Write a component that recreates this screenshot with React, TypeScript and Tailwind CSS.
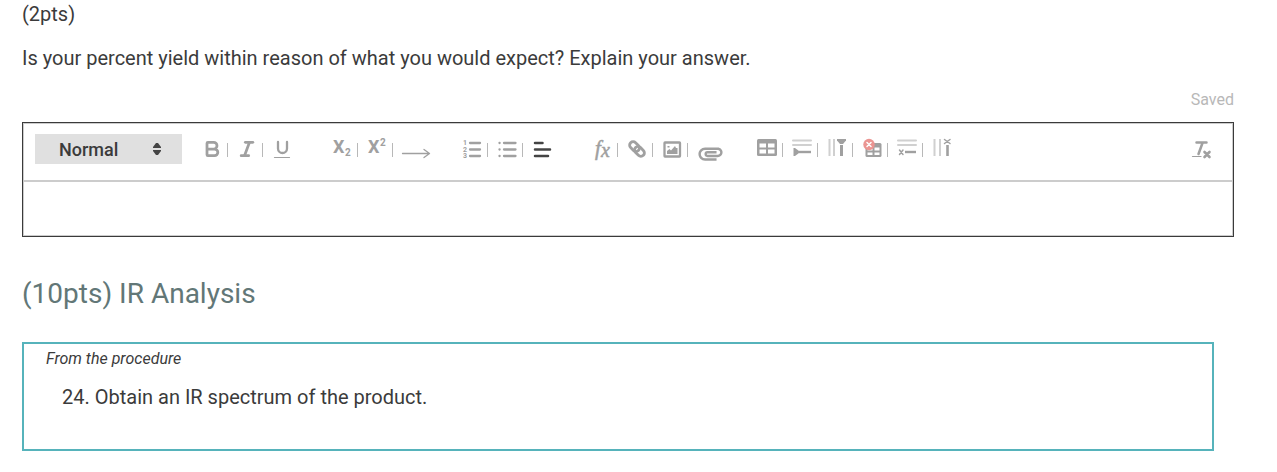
import type { ReactNode } from 'react'
import { Bold, Italic } from 'lucide-react'
import { MdAttachment } from 'react-icons/md'

type Tool = {
  label: string
  icon: ReactNode
  active?: boolean
}

const lightRows = <path d="M9 6.5h18M9 11h18" className="stroke-[#d0d0d0]" />

const groups: Tool[][] = [
  [
    { label: 'Bold', icon: <Bold x={8} y={5} size={20} strokeWidth={3.3} /> },
    { label: 'Italic', icon: <Italic x={8} y={5} size={20} strokeWidth={3.3} /> },
    {
      label: 'Underline',
      icon: (
        <>
          <path d="M14 8v6.5a4.5 4.5 0 0 0 9 0V8" strokeWidth={2.3} />
          <path d="M10.5 23.5h15" strokeWidth={1.2} />
        </>
      ),
    },
  ],
  [
    {
      label: 'Subscript',
      icon: (
        <g className="fill-[#a0a0a0] font-bold" stroke="none">
          <text x="9" y="19" fontSize="18">X</text>
          <text x="21" y="22" fontSize="10">2</text>
        </g>
      ),
    },
    {
      label: 'Superscript',
      icon: (
        <g className="fill-[#a0a0a0] font-bold" stroke="none">
          <text x="9" y="19" fontSize="18">X</text>
          <text x="21" y="12" fontSize="10">2</text>
        </g>
      ),
    },
    { label: 'Reaction arrow', icon: <path d="M8.5 19.5h27M30 15.5l5.5 4-5.5 4" strokeWidth={1.3} /> },
  ],
  [
    {
      label: 'Numbered list',
      icon: (
        <>
          <path d="M16 9h10M16 15.5h10M16 22h10" strokeWidth={2.3} />
          <g className="fill-[#a0a0a0] font-bold" stroke="none" fontSize="7">
            <text x="9" y="11">1</text>
            <text x="9" y="18">2</text>
            <text x="9" y="24">3</text>
          </g>
        </>
      ),
    },
    {
      label: 'Bulleted list',
      icon: (
        <path
          d="M15 9h11.5M15 15.5h11.5M15 22h11.5M10.5 9h.1M10.5 15.5h.1M10.5 22h.1"
          strokeWidth={2.3}
        />
      ),
    },
    { label: 'Align', active: true, icon: <path d="M11 9h7.5M11 15.5h15M11 22h13" strokeWidth={2.5} /> },
  ],
  [
    {
      label: 'Formula',
      icon: (
        <g strokeWidth={0.5} className="fill-[#a0a0a0] font-['Liberation_Serif',serif] italic">
          <text x="11" y="21" fontSize="21">f</text>
          <text x="17" y="23" fontSize="20">x</text>
        </g>
      ),
    },
    {
      label: 'Link',
      icon: (
        <g transform="rotate(45 18 15)" strokeWidth={2.8}>
          <rect x="9" y="11.5" width="11" height="7" rx="3.5" />
          <rect x="16" y="11.5" width="11" height="7" rx="3.5" />
        </g>
      ),
    },
    {
      label: 'Image',
      icon: (
        <>
          <rect x="10.5" y="8.5" width="15.5" height="14" rx="0.5" strokeWidth={2.3} />
          <path
            d="M13 20v-3l2.5-2 1.5 1.5 4-4.5 1 2h1.5v6zM13.5 12h2v1.5h-2z"
            stroke="none"
            className="fill-[#a0a0a0]"
          />
        </>
      ),
    },
    { label: 'Attachment', icon: <MdAttachment x={7} y={5} size={29} stroke="none" className="fill-[#a0a0a0]" /> },
  ],
  [
    {
      label: 'Insert table',
      icon: (
        <>
          <rect x="8" y="5" width="20" height="17" rx="1.5" stroke="none" className="fill-[#a0a0a0]" />
          <path
            d="M10.5 9.5h6.5v4h-6.5zM19 9.5h6.5v4H19zM10.5 15.5h6.5v4h-6.5zM19 15.5h6.5v4H19z"
            stroke="none"
            className="fill-white"
          />
        </>
      ),
    },
    {
      label: 'Insert row',
      icon: (
        <>
          {lightRows}
          <path d="M15 18h12" strokeLinecap="butt" strokeWidth={2.4} />
          <path d="M9.5 14h1.5l4 3v2l-4 3H9.5z" stroke="none" className="fill-[#a0a0a0]" />
        </>
      ),
    },
    {
      label: 'Insert column',
      icon: (
        <>
          <path d="M10.5 5v17M15 5v17" strokeLinecap="butt" className="stroke-[#d0d0d0]" />
          <path d="M22.5 11v11" strokeLinecap="butt" strokeWidth={3} />
          <path d="M18 5h9v1.5L24 10h-3l-3-3.5z" stroke="none" className="fill-[#a0a0a0]" />
        </>
      ),
    },
    {
      label: 'Delete table',
      icon: (
        <>
          <rect x="11.5" y="9" width="16" height="14" rx="1.5" stroke="none" className="fill-[#a0a0a0]" />
          <path
            d="M13.5 13.5h5v3h-5zM20.5 13.5h5v3h-5zM13.5 18.5h5v2.5h-5zM20.5 18.5h5v2.5h-5z"
            stroke="none"
            className="fill-white"
          />
          <circle cx="15" cy="10.5" r="5.7" stroke="none" className="fill-[#eb9592]" />
          <path d="M13 8.5l4 4M17 8.5l-4 4" strokeWidth={1.5} className="stroke-white" />
        </>
      ),
    },
    {
      label: 'Delete row',
      icon: (
        <>
          {lightRows}
          <path d="M16 18h11" strokeLinecap="butt" strokeWidth={2.4} />
          <path d="M10.5 16l3.5 4.5M14 16l-3.5 4.5" strokeWidth={1.5} />
        </>
      ),
    },
    {
      label: 'Delete column',
      icon: (
        <>
          <path d="M10.5 5v17M16 5v17" strokeLinecap="butt" className="stroke-[#d0d0d0]" />
          <path d="M23.5 11v11" strokeLinecap="butt" strokeWidth={2.6} />
          <path d="M20.5 5.5l5.5 4M26 5.5l-5.5 4" strokeWidth={1.5} />
        </>
      ),
    },
  ],
]

const cleanTool: Tool = {
  label: 'Remove formatting',
  icon: (
    <>
      <path d="M14.5 8.5h10M20.5 9l-4 11" strokeWidth={2.5} />
      <path d="M10.5 22.5h8.5" strokeWidth={1.2} />
      <path d="M22.5 18l5 5M27.5 18l-5 5" strokeWidth={2.6} />
    </>
  ),
}

function ToolButton({ tool }: { tool: Tool }) {
  return (
    <button type="button" aria-label={tool.label} className="h-8 w-[33px]">
      <svg
        viewBox="0 0 33 32"
        fill="none"
        strokeWidth={2}
        strokeLinecap="round"
        strokeLinejoin="round"
        className={[
          'h-8 w-[33px] overflow-visible',
          tool.active ? 'stroke-[#444444] text-[#444444]' : 'stroke-[#a0a0a0] text-[#a0a0a0]',
        ].join(' ')}
        aria-hidden
      >
        {tool.icon}
      </svg>
    </button>
  )
}

function FormatSelect() {
  return (
    <div className="relative mr-3">
      <select
        aria-label="Text style"
        className="h-[30px] w-[147px] appearance-none bg-[#e0e0e0] pt-0.5 pl-6 text-lg leading-7 font-medium text-[#3b3b3b]"
      >
        <option>Normal</option>
      </select>
      <svg viewBox="0 0 8 12" className="pointer-events-none absolute top-[9px] right-[21px] h-3 w-2 fill-[#444444]" aria-hidden>
        <path d="M3 0h2l3 4v1H0V4zM3 12h2l3-4V7H0v1z" />
      </svg>
    </div>
  )
}

function Editor() {
  return (
    <div className="border border-[#3b3b3b]">
      <div className="border border-[#cccccc]">
        <div className="flex h-[58px] items-start border-b-2 border-[#cccccc] pt-[10px] pr-[17px] pl-[11px]">
          <FormatSelect />
          <div className="flex gap-[25px]">
            {groups.map((group) => (
              <div key={group[0].label} className="flex">
                {group.map((tool, i) => (
                  <div key={tool.label} className="flex w-[35px] items-center">
                    <ToolButton tool={tool} />
                    {i < group.length - 1 && <span className="h-[14px] w-px bg-[#b8b8b8]" />}
                  </div>
                ))}
              </div>
            ))}
          </div>
          <div className="ml-auto">
            <ToolButton tool={cleanTool} />
          </div>
        </div>
        <textarea aria-label="Your answer" className="block h-[53px] w-full resize-none px-4 py-3 outline-none" />
      </div>
    </div>
  )
}

export default function App() {
  return (
    <main className="bg-white pr-[43px] pb-5 pl-[22px] font-[Roboto,sans-serif] text-xl leading-7 text-[#3b3b3b]">
      <p>(2pts)</p>
      <p className="mt-4">Is your percent yield within reason of what you would expect? Explain your answer.</p>
      <p className="mt-4 mb-[10px] text-right text-base leading-6 text-[#b8b8b8]">Saved</p>
      <Editor />
      <h2 className="mt-[39px] text-[28px] leading-9 text-[#627777]">(10pts) IR Analysis</h2>
      <section className="mt-[30px] mr-5 border-2 border-[#56b3bb] px-[22px] pt-[3px] pb-[38px]">
        <p className="text-base leading-6 italic">From the procedure</p>
        <ol start={24} className="mt-3 list-inside list-decimal pl-4">
          <li>Obtain an IR spectrum of the product.</li>
        </ol>
      </section>
    </main>
  )
}
